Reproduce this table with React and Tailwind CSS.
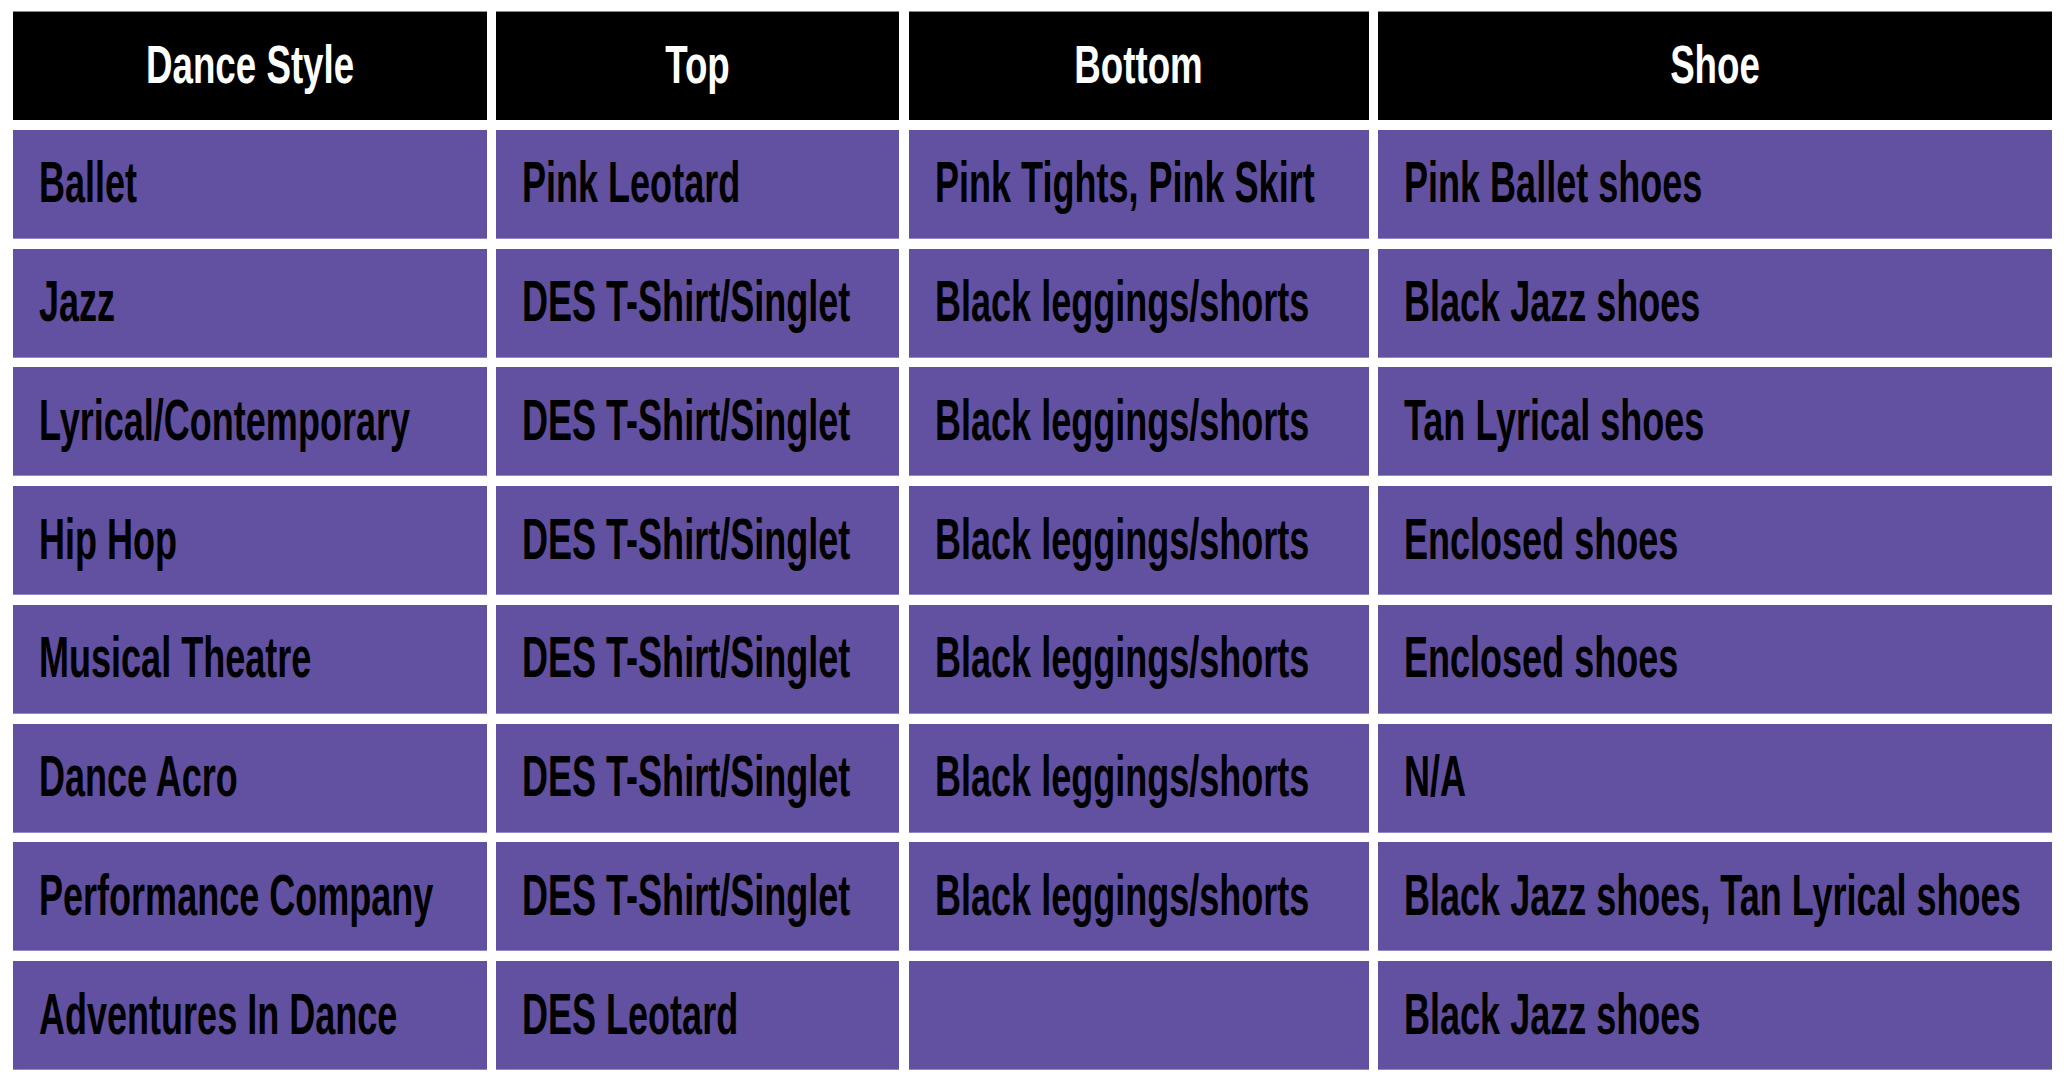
const headers = ["Dance Style", "Top", "Bottom", "Shoe"];

const rows = [
  ["Ballet", "Pink Leotard", "Pink Tights, Pink Skirt", "Pink Ballet shoes"],
  ["Jazz", "DES T-Shirt/Singlet", "Black leggings/shorts", "Black Jazz shoes"],
  ["Lyrical/Contemporary", "DES T-Shirt/Singlet", "Black leggings/shorts", "Tan Lyrical shoes"],
  ["Hip Hop", "DES T-Shirt/Singlet", "Black leggings/shorts", "Enclosed shoes"],
  ["Musical Theatre", "DES T-Shirt/Singlet", "Black leggings/shorts", "Enclosed shoes"],
  ["Dance Acro", "DES T-Shirt/Singlet", "Black leggings/shorts", "N/A"],
  ["Performance Company", "DES T-Shirt/Singlet", "Black leggings/shorts", "Black Jazz shoes, Tan Lyrical shoes"],
  ["Adventures In Dance", "DES Leotard", "", "Black Jazz shoes"],
];

const App = () => {
  return (
    <div className="min-h-screen bg-white pl-[13px] pt-[11px] font-['Liberation_Sans',Arial,sans-serif]">
      <div className="grid grid-cols-[474px_403px_460px_674px] grid-rows-[repeat(9,109px)] gap-x-[9.3px] gap-y-[9.75px] w-[2039px]">
        {/* Header */}
        {headers.map((h) => (
          <div
            key={h}
            className="flex items-center justify-center pb-[5px] bg-black border-t border-[#8a8a8a]"
          >
            <span className="inline-block whitespace-nowrap text-[54px] leading-none font-bold text-white scale-x-[0.68]">
              {h}
            </span>
          </div>
        ))}

        {/* Body */}
        {rows.map((row, i) =>
          row.map((cell, j) => (
            <div
              key={i + "-" + j}
              className="flex items-center pl-[26px] pb-[2px] bg-[#6250a0] border-b border-[#9487c6]"
            >
              <span className="inline-block origin-left whitespace-nowrap text-[57px] leading-none font-bold text-black scale-x-[0.632]">
                {cell}
              </span>
            </div>
          ))
        )}
      </div>
    </div>
  );
};

export default App;
